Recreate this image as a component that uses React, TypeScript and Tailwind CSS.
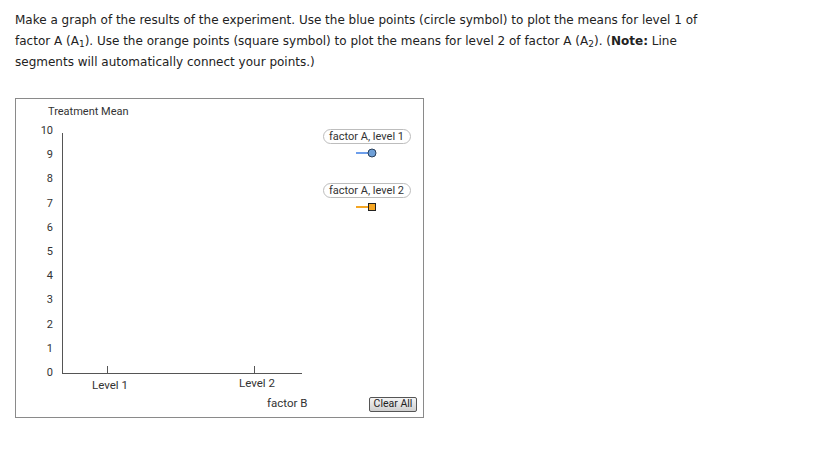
const yTicks = [10, 9, 8, 7, 6, 5, 4, 3, 2, 1, 0];

const Chart = () => (
  <svg width={300} height={318} className="shrink-0" style={{ fontFamily: "Roboto, 'DejaVu Sans', sans-serif" }}>
    <text x={32} y={13} fontSize={11} fill="#333" dominantBaseline="middle">
      Treatment Mean
    </text>
    {yTicks.map((v) => (
      <text key={v} x={37} y={274 - v * 24.2} fontSize={11} fill="#333" textAnchor="end" dominantBaseline="middle">
        {v}
      </text>
    ))}
    <line x1={46.5} y1={34} x2={46.5} y2={274} stroke="#555" strokeWidth={1} />
    <line x1={46} y1={274.5} x2={286} y2={274.5} stroke="#555" strokeWidth={1} />
    <line x1={91.5} y1={267} x2={91.5} y2={274} stroke="#555" strokeWidth={1} />
    <line x1={238.5} y1={267} x2={238.5} y2={274} stroke="#555" strokeWidth={1} />
    <text x={76} y={287} fontSize={11.5} fill="#333" dominantBaseline="middle">
      Level 1
    </text>
    <text x={223} y={285} fontSize={11.5} fill="#333" dominantBaseline="middle">
      Level 2
    </text>
    <text x={251} y={305} fontSize={11.5} fill="#333" dominantBaseline="middle">
      factor B
    </text>
  </svg>
);

const Pill = ({ label }: { label: string }) => (
  <div className="h-[15px] w-[88px] rounded-full border border-[#bdbdbd] bg-white flex items-center justify-center text-[11px] leading-none text-[#333]">
    {label}
  </div>
);

export default function App() {
  return (
    <div className="min-h-screen bg-white text-[#222] font-['DejaVu_Sans',Verdana,sans-serif]">
      <p className="w-[760px] pl-[15px] pt-[10px] text-[12px] leading-[21px]">
        Make a graph of the results of the experiment. Use the blue points (circle symbol) to plot the means for level 1 of
        <br />
        factor A (A<sub className="text-[9px] leading-none">1</sub>). Use the orange points (square symbol) to plot the means for level 2 of
        factor A (A<sub className="text-[9px] leading-none">2</sub>). (<b>Note:</b> Line
        <br />
        segments will automatically connect your points.)
      </p>

      <div className="ml-[15px] mt-[25px] w-[409px] h-[320px] border border-[#8a8a8a] flex font-['Roboto',sans-serif]">
        <Chart />
        <div className="flex flex-col items-center flex-1 pt-[30px] pr-[6px] pb-[5px]">
          <Pill label="factor A, level 1" />
          <svg width={22} height={10} className="mt-[4px]">
            <line x1={0} y1={5} x2={14} y2={5} stroke="#6d9eeb" strokeWidth={2} />
            <circle cx={16} cy={5} r={4} fill="#6fa0d8" stroke="#2a3f5a" strokeWidth={1} />
          </svg>
          <div className="mt-[25px]">
            <Pill label="factor A, level 2" />
          </div>
          <svg width={22} height={10} className="mt-[4px]">
            <line x1={0} y1={5} x2={13} y2={5} stroke="#f5a623" strokeWidth={2} />
            <rect x={12.5} y={1.5} width={7} height={7} fill="#f5a623" stroke="#222" strokeWidth={1} />
          </svg>
          <button className="mt-auto self-end h-[15px] w-[48px] border border-[#555] rounded-[2px] bg-gradient-to-b from-[#f4f4f4] to-[#cfcfcf] text-[10.5px] leading-none text-[#222]">
            Clear All
          </button>
        </div>
      </div>
    </div>
  );
}
